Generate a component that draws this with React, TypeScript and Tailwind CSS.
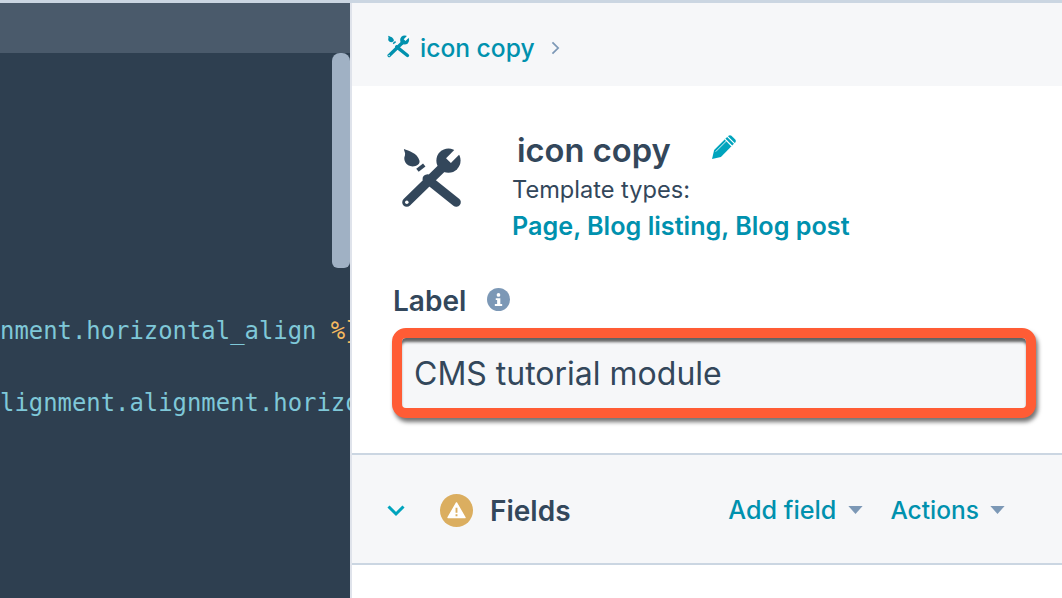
const SANS = "font-['Inter','Noto_Sans',sans-serif]";

function ToolsIcon({ className }: { className: string }) {
  return (
    <svg viewBox="0 0 64 64" className={className} aria-hidden="true">
      <path d="M3 2C8 4 17 6 19 14C20 18 16 20 12 20C5 20 2 13 4 9C5 6 3 4 3 2Z" fill="currentColor" />
      <path d="M17 24L24 18.5" stroke="currentColor" strokeWidth="4" />
      <path d="M6 57L42 22" stroke="currentColor" strokeWidth="9.5" strokeLinecap="round" />
      <path d="M27 33L57 57" stroke="currentColor" strokeWidth="9.5" strokeLinecap="round" />
      <circle cx="49" cy="14" r="12.5" fill="currentColor" />
      <path d="M49 14L62 1" stroke="#fff" strokeWidth="7" />
      <circle cx="6" cy="57" r="1.8" fill="#fff" />
    </svg>
  );
}

function Caret() {
  return (
    <svg viewBox="0 0 16 9" className="w-[15px] h-[8px] text-[#7c98b6]" aria-hidden="true">
      <path d="M0 0H16L8 9Z" fill="currentColor" />
    </svg>
  );
}

export default function App() {
  return (
    <div className={`${SANS} w-[1062px] h-[598px] overflow-hidden flex border-t-[3px] border-[#cbd6e2] bg-white`}>
      {/* Code editor */}
      <div className="w-[350px] shrink-0 flex flex-col relative">
        <div className="h-[50px] bg-[#4a5a6b]" />
        <div className="flex-1 bg-[#2e3f50] pt-[260px] font-['DejaVu_Sans_Mono',monospace] text-[23.9px] leading-[36px] text-[#7fc8d8] whitespace-nowrap overflow-hidden">
          <div>
            nment.horizontal_align <span className="text-[#f5b95f]">%{"}"}</span>
          </div>
          <div className="mt-[36px]">lignment.alignment.horizontal</div>
        </div>
        <div className="absolute right-0 top-[50px] w-[18px] h-[215px] bg-[#a0b1c4] rounded-t-[8px] rounded-b-[6px]" />
      </div>
      <div className="w-[2px] shrink-0 bg-[#dfe3eb]" />

      {/* Module sidebar */}
      <div className="flex-1 flex flex-col">
        <div className="h-[83px] shrink-0 bg-[#f6f7f9] flex items-center pl-[35px] pt-[7px] text-[#0091ae]">
          <ToolsIcon className="w-[23px] h-[23px] -mt-[4px]" />
          <span className="ml-[10px] text-[24.6px] font-medium">icon copy</span>
          <svg viewBox="0 0 10 16" className="ml-[16px] w-[9px] h-[14px] text-[#7c98b6]" aria-hidden="true">
            <path d="M1.5 1.5L8 8L1.5 14.5" fill="none" stroke="currentColor" strokeWidth="2" />
          </svg>
        </div>

        <div className="h-[367px] shrink-0 flex flex-col">
          <div className="flex pl-[49px] pt-[42px]">
            <ToolsIcon className="w-[62px] h-[62px] mt-[19px] text-[#33475b]" />
            <div className="ml-[49px]">
              <div className="flex items-center ml-[5px] h-[44px] pt-[1px]">
                <span className="text-[32.7px] font-semibold text-[#33475b]">icon copy</span>
                <svg viewBox="0 0 24 24" className="ml-[40px] -mt-[6px] w-[25px] h-[25px] text-[#00a4bd]" aria-hidden="true">
                  <path d="M1 23L3 14.5L15.5 2L22 8.5L9.5 21Z" fill="currentColor" />
                  <path d="M16.8 0.7C17.6 0 18.8 0 19.6 0.7L23.3 4.4C24 5.2 24 6.4 23.3 7.2L22.8 7.7L16.3 1.2Z" fill="currentColor" />
                  <path d="M13.5 4L20 10.5" stroke="#fff" strokeWidth="1.2" />
                  <path d="M4.5 16L15 5.5" stroke="#fff" strokeWidth="0.8" />
                </svg>
              </div>
              <div className="text-[23.6px] leading-[30px] text-[#33475b] mt-[3px]">Template types:</div>
              <div className="text-[25.2px] leading-[30px] mt-[6px] font-semibold text-[#0091ae] whitespace-nowrap">
                Page, Blog listing, Blog post
              </div>
            </div>
          </div>

          <div className="flex items-center pl-[41px] mt-[43px] h-[34px]">
            <span className="text-[28px] font-semibold text-[#33475b]">Label</span>
            <span className="ml-[21px] -mt-[4px] w-[23px] h-[23px] rounded-full bg-[#7c98b6] text-white flex items-center justify-center">
              <svg viewBox="0 0 12 14" className="w-[11px] h-[15px]" aria-hidden="true">
                <circle cx="6" cy="2" r="2" fill="currentColor" />
                <path d="M3 5.5H8V12H10V14H2V12H4.5V7.5H3Z" fill="currentColor" />
              </svg>
            </span>
          </div>

          <div className="ml-[40px] mt-[10px] w-[644px] h-[90px] rounded-[14px] border-[10px] border-[#ff5c35] bg-[#f6f7f9] flex items-center pl-[12px] pt-[2px] text-[32px] text-[#33475b] shadow-[2px_4px_4px_rgba(0,0,0,0.55),inset_0_5px_3px_-1px_rgba(0,0,0,0.6)]">
            CMS tutorial module
          </div>
        </div>

        <div className="h-[112px] shrink-0 bg-[#f6f7f9] border-y-2 border-[#cbd6e2] flex items-center pl-[35px] pr-[57px] pt-[3px]">
          <svg viewBox="0 0 18 12" className="w-[18px] h-[12px] text-[#00a4bd]" aria-hidden="true">
            <path d="M1.5 1.5L9 9L16.5 1.5" fill="none" stroke="currentColor" strokeWidth="3" />
          </svg>
          <span className="ml-[35px] w-[33px] h-[33px] rounded-full bg-[#dbae60] flex items-center justify-center">
            <svg viewBox="0 0 20 18" className="w-[19px] h-[17px]" aria-hidden="true">
              <path d="M10 1L19 16.5H1Z" fill="#fff" stroke="#fff" strokeWidth="1.5" strokeLinejoin="round" />
              <path d="M9 6H11V11.5H9Z M9 13H11V15H9Z" fill="#dbae60" />
            </svg>
          </span>
          <span className="ml-[17px] text-[28px] font-semibold text-[#33475b]">Fields</span>
          <div className="ml-auto flex items-center font-medium text-[#0091ae]">
            <span className="text-[25.2px]">Add field</span>
            <span className="ml-[12px]"><Caret /></span>
            <span className="ml-[27px] text-[24.5px]">Actions</span>
            <span className="ml-[11px]"><Caret /></span>
          </div>
        </div>
      </div>
    </div>
  );
}
